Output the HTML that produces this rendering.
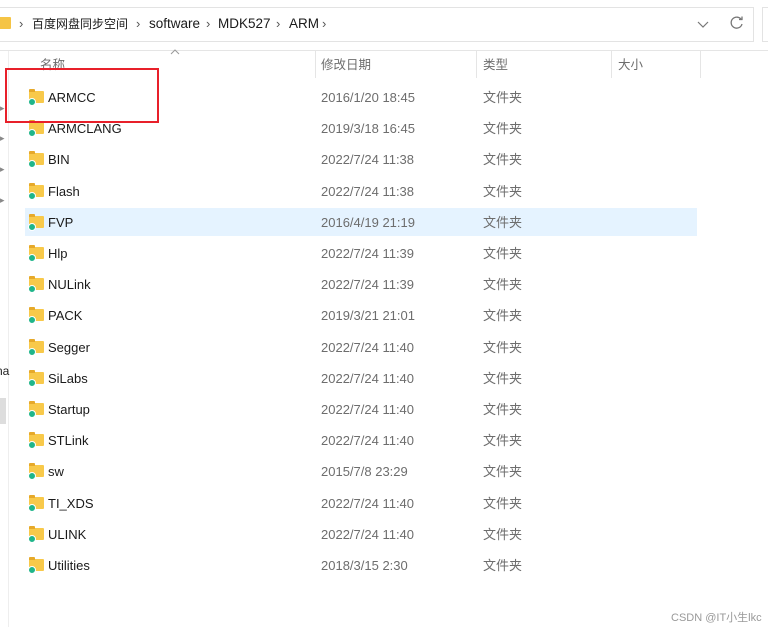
<!DOCTYPE html>
<html><head><meta charset="utf-8"><style>
*{margin:0;padding:0;box-sizing:border-box}
body{width:768px;height:627px;background:#fff;position:relative;overflow:hidden;font-family:"Liberation Sans","Noto Sans CJK SC",sans-serif;color:#222;font-size:13px}
.a{position:absolute}
.addr{left:-2px;top:7px;width:756px;height:35px;border:1px solid #e3e3e3;}
.addr2{left:762px;top:7px;width:20px;height:35px;border:1px solid #e3e3e3}
.crumb{top:16px;font-size:13.5px;line-height:16px;color:#1a1a1a;white-space:nowrap}
.sep{top:16px;font-size:13px;line-height:16px;color:#555}
.hline{left:0;top:50px;width:768px;height:1px;background:#e5e5e5}
.vline{width:1px;top:51px;height:27px;background:#e5e5e5}
.hdr{top:58px;color:#6d6d6d;font-size:12.5px;line-height:15px}
.row{left:0;width:768px;height:28px}
.row span{position:absolute;top:7px;font-size:13px;line-height:16px}
.nm{left:48px;color:#1a1a1a}
.dt{left:321px;color:#6d6d6d}
.tp{left:483px;color:#6d6d6d}
.fold{position:absolute;left:29px;top:8px;width:15px;height:12px;background:#f8c94a;border-radius:1px}
.fold:before{content:"";position:absolute;left:0;top:-2px;width:6px;height:3px;background:#e6a92a;border-radius:1px 1px 0 0}
.fold:after{content:"";position:absolute;left:-1px;top:7px;width:6px;height:6px;background:#1fb58a;border-radius:50%;border:1px solid #fff}
</style></head><body>
<div class="a addr"></div><div class="a addr2"></div>
<div class="a" style="left:-4px;top:17px;width:15px;height:12px;background:#f5c445;border-radius:1px"></div>
<div class="a sep" style="left:19px">›</div>
<div class="a crumb" style="left:32px;font-size:12px;letter-spacing:0">百度网盘同步空间</div>
<div class="a sep" style="left:136px">›</div>
<div class="a crumb" style="left:149px">software</div>
<div class="a sep" style="left:206px">›</div>
<div class="a crumb" style="left:218px">MDK527</div>
<div class="a sep" style="left:276px">›</div>
<div class="a crumb" style="left:289px">ARM</div>
<div class="a sep" style="left:322px">›</div>
<svg class="a" style="left:696px;top:17px" width="14" height="14"><path d="M2 5 L7 10 L12 5" fill="none" stroke="#777" stroke-width="1.2"/></svg>
<svg class="a" style="left:729px;top:15px" width="16" height="16"><path d="M12.5 5 A5.5 5.5 0 1 0 13 9" fill="none" stroke="#777" stroke-width="1.3"/><path d="M10 4.5 L13 4.5 L13 1.5" fill="none" stroke="#777" stroke-width="1.3"/></svg>
<div class="a hline"></div>
<div class="a" style="left:8px;top:51px;width:1px;height:576px;background:#eee"></div>
<svg class="a" style="left:170px;top:49px" width="10" height="6"><path d="M1 5 L5 1 L9 5" fill="none" stroke="#999"/></svg>
<div class="a vline" style="left:315px"></div><div class="a vline" style="left:476px"></div><div class="a vline" style="left:611px"></div><div class="a vline" style="left:700px"></div>
<div class="a hdr" style="left:40px">名称</div>
<div class="a hdr" style="left:321px">修改日期</div>
<div class="a hdr" style="left:483px">类型</div>
<div class="a hdr" style="left:618px">大小</div>
<div class="a" style="left:0;top:103px;color:#888;font-size:9px">▸</div>
<div class="a" style="left:0;top:133px;color:#888;font-size:9px">▸</div>
<div class="a" style="left:0;top:164px;color:#888;font-size:9px">▸</div>
<div class="a" style="left:0;top:195px;color:#888;font-size:9px">▸</div>
<div class="a" style="left:-4px;top:364px;font-size:12px">na</div>
<div class="a" style="left:0;top:398px;width:6px;height:26px;background:#ddd"></div>
<div class="a" style="left:25px;top:208px;width:672px;height:28px;background:#e5f3ff"></div>
<div id="rows"></div>
<div class="a" style="left:5px;top:68px;width:154px;height:55px;border:2px solid #e8202a"></div>
<div class="a" style="left:671px;top:609px;font-size:11px;color:#999">CSDN @IT小生lkc</div>
<script>
var d=[["ARMCC","2016/1/20 18:45"],["ARMCLANG","2019/3/18 16:45"],["BIN","2022/7/24 11:38"],["Flash","2022/7/24 11:38"],["FVP","2016/4/19 21:19"],["Hlp","2022/7/24 11:39"],["NULink","2022/7/24 11:39"],["PACK","2019/3/21 21:01"],["Segger","2022/7/24 11:40"],["SiLabs","2022/7/24 11:40"],["Startup","2022/7/24 11:40"],["STLink","2022/7/24 11:40"],["sw","2015/7/8 23:29"],["TI_XDS","2022/7/24 11:40"],["ULINK","2022/7/24 11:40"],["Utilities","2018/3/15 2:30"]];
var h="";d.forEach(function(r,i){var t=83+i*31.2;h+='<div class="a row" style="top:'+t+'px"><i class="fold"></i><span class="nm">'+r[0]+'</span><span class="dt">'+r[1]+'</span><span class="tp">文件夹</span></div>';});
document.getElementById("rows").innerHTML=h;
</script>
</body></html>
